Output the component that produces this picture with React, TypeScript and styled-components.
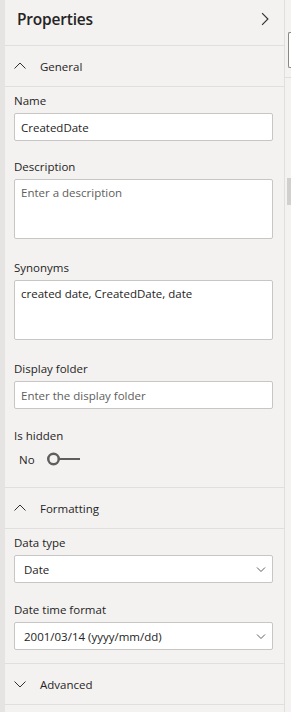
import React from "react";
import styled, { createGlobalStyle } from "styled-components";

const Global = createGlobalStyle`
  html, body { margin: 0; padding: 0; background: #f3f2f1; }
  body { font-family: "Open Sans", "Noto Sans", sans-serif; color: #252423; }
  * { box-sizing: border-box; }
`;

const Page = styled.div`
  display: flex;
  width: 291px;
  height: 712px;
  overflow: hidden;
  background: #f3f2f1;
`;

const LeftEdge = styled.div`
  width: 5px;
  flex: none;
  background: #e6e4e2;
`;

const Panel = styled.div`
  width: 280px;
  flex: none;
  display: flex;
  flex-direction: column;
  border-right: 1px solid #e1dfdd;
  background: #f3f2f1;
`;

const RightEdge = styled.div`
  flex: 1;
  display: flex;
  flex-direction: column;
`;

const PeekBox = styled.div`
  margin: 32px 0 0 3px;
  height: 36px;
  border: 1px solid #8a8886;
  border-right: none;
  border-radius: 2px 0 0 2px;
  background: #fff;
`;

const PeekLine = styled.div`
  margin-top: 9px;
  height: 1px;
  background: #e1dfdd;
`;

const PeekBar = styled.div`
  margin: 100px 0 0 2px;
  height: 27px;
  background: #d2d0ce;
`;

const Header = styled.div`
  height: 46px;
  flex: none;
  display: flex;
  align-items: center;
  justify-content: space-between;
  padding: 0 12px 7px 12px;
  border-bottom: 1px solid #e1dfdd;
`;

const Title = styled.div`
  font-size: 15.5px;
  font-weight: 600;
  color: #252423;
  letter-spacing: -0.2px;
`;

const SectionHeader = styled.div`
  height: 41px;
  flex: none;
  display: flex;
  align-items: center;
  gap: 14px;
  padding-left: 9px;
  border-bottom: 1px solid #e1dfdd;
  font-size: 11.5px;
  color: #252423;
`;

const Body = styled.div<{ $bottom: number }>`
  display: flex;
  flex-direction: column;
  padding: 0 11px ${(p) => p.$bottom}px 9px;
  border-bottom: 1px solid #e1dfdd;
`;

const Field = styled.div<{ $top: number }>`
  display: flex;
  flex-direction: column;
  margin-top: ${(p) => p.$top}px;
`;

const Label = styled.div`
  font-size: 11.5px;
  line-height: 16px;
  margin-bottom: 4px;
  color: #252423;
`;

const Input = styled.div<{ $placeholder?: boolean }>`
  height: 28px;
  display: flex;
  align-items: center;
  padding: 0 6px;
  background: #fff;
  border: 1px solid #c8c6c4;
  border-radius: 2px;
  font-size: 11.5px;
  color: ${(p) => (p.$placeholder ? "#605e5c" : "#252423")};
`;

const TextArea = styled.div<{ $placeholder?: boolean }>`
  height: 60px;
  padding: 5px 6px;
  background: #fff;
  border: 1px solid #c8c6c4;
  border-radius: 2px;
  font-size: 11.5px;
  line-height: 16px;
  color: ${(p) => (p.$placeholder ? "#605e5c" : "#252423")};
`;

const Select = styled.div`
  height: 28px;
  display: flex;
  align-items: center;
  justify-content: space-between;
  padding: 0 6px 0 9px;
  background: #fff;
  border: 1px solid #c8c6c4;
  border-radius: 2px;
  font-size: 11.5px;
  color: #252423;
`;

const ToggleRow = styled.div`
  margin-top: 1px;
  height: 20px;
  display: flex;
  align-items: center;
  gap: 12px;
  padding-left: 5px;
  font-size: 11.5px;
  color: #252423;
`;

const Chevron = ({ dir, size = 12 }: { dir: "up" | "down" | "right"; size?: number }) => {
  const pts =
    dir === "up"
      ? "0.5,8.5 6,3 11.5,8.5"
      : dir === "down"
      ? "0.5,3.5 6,9 11.5,3.5"
      : "3.5,1 8.5,6 3.5,11";
  return (
    <svg width={size} height={size} viewBox="0 0 12 12">
      <polyline points={pts} fill="none" stroke="#323130" strokeWidth="1" />
    </svg>
  );
};

const SmallChevron = () => (
  <svg width="10" height="10" viewBox="0 0 10 10">
    <polyline points="1,3.5 5,7.5 9,3.5" fill="none" stroke="#605e5c" strokeWidth="1" />
  </svg>
);

const Toggle = () => (
  <svg width="34" height="14" viewBox="0 0 34 14">
    <line x1="12" y1="7" x2="33" y2="7" stroke="#605e5c" strokeWidth="2" />
    <circle cx="6.5" cy="7" r="5.25" fill="#f3f2f1" stroke="#605e5c" strokeWidth="2.5" />
  </svg>
);

export default function App() {
  return (
    <Page>
      <Global />
      <LeftEdge />
      <Panel>
        <Header>
          <Title>Properties</Title>
          <Chevron dir="right" size={14} />
        </Header>
        <SectionHeader>
          <Chevron dir="up" />
          <span>General</span>
        </SectionHeader>
        <Body $bottom={18}>
          <Field $top={6}>
            <Label>Name</Label>
            <Input>CreatedDate</Input>
          </Field>
          <Field $top={18}>
            <Label>Description</Label>
            <TextArea $placeholder>Enter a description</TextArea>
          </Field>
          <Field $top={21}>
            <Label>Synonyms</Label>
            <TextArea>created date, CreatedDate, date</TextArea>
          </Field>
          <Field $top={21}>
            <Label>Display folder</Label>
            <Input $placeholder>Enter the display folder</Input>
          </Field>
          <Field $top={19}>
            <Label>Is hidden</Label>
            <ToggleRow>
              <span>No</span>
              <Toggle />
            </ToggleRow>
          </Field>
        </Body>
        <SectionHeader>
          <Chevron dir="up" />
          <span>Formatting</span>
        </SectionHeader>
        <Body $bottom={13}>
          <Field $top={6}>
            <Label>Data type</Label>
            <Select>
              <span>Date</span>
              <SmallChevron />
            </Select>
          </Field>
          <Field $top={19}>
            <Label>Date time format</Label>
            <Select>
              <span>2001/03/14 (yyyy/mm/dd)</span>
              <SmallChevron />
            </Select>
          </Field>
        </Body>
        <SectionHeader>
          <Chevron dir="down" />
          <span>Advanced</span>
        </SectionHeader>
      </Panel>
      <RightEdge>
        <PeekBox />
        <PeekLine />
        <PeekBar />
      </RightEdge>
    </Page>
  );
}
